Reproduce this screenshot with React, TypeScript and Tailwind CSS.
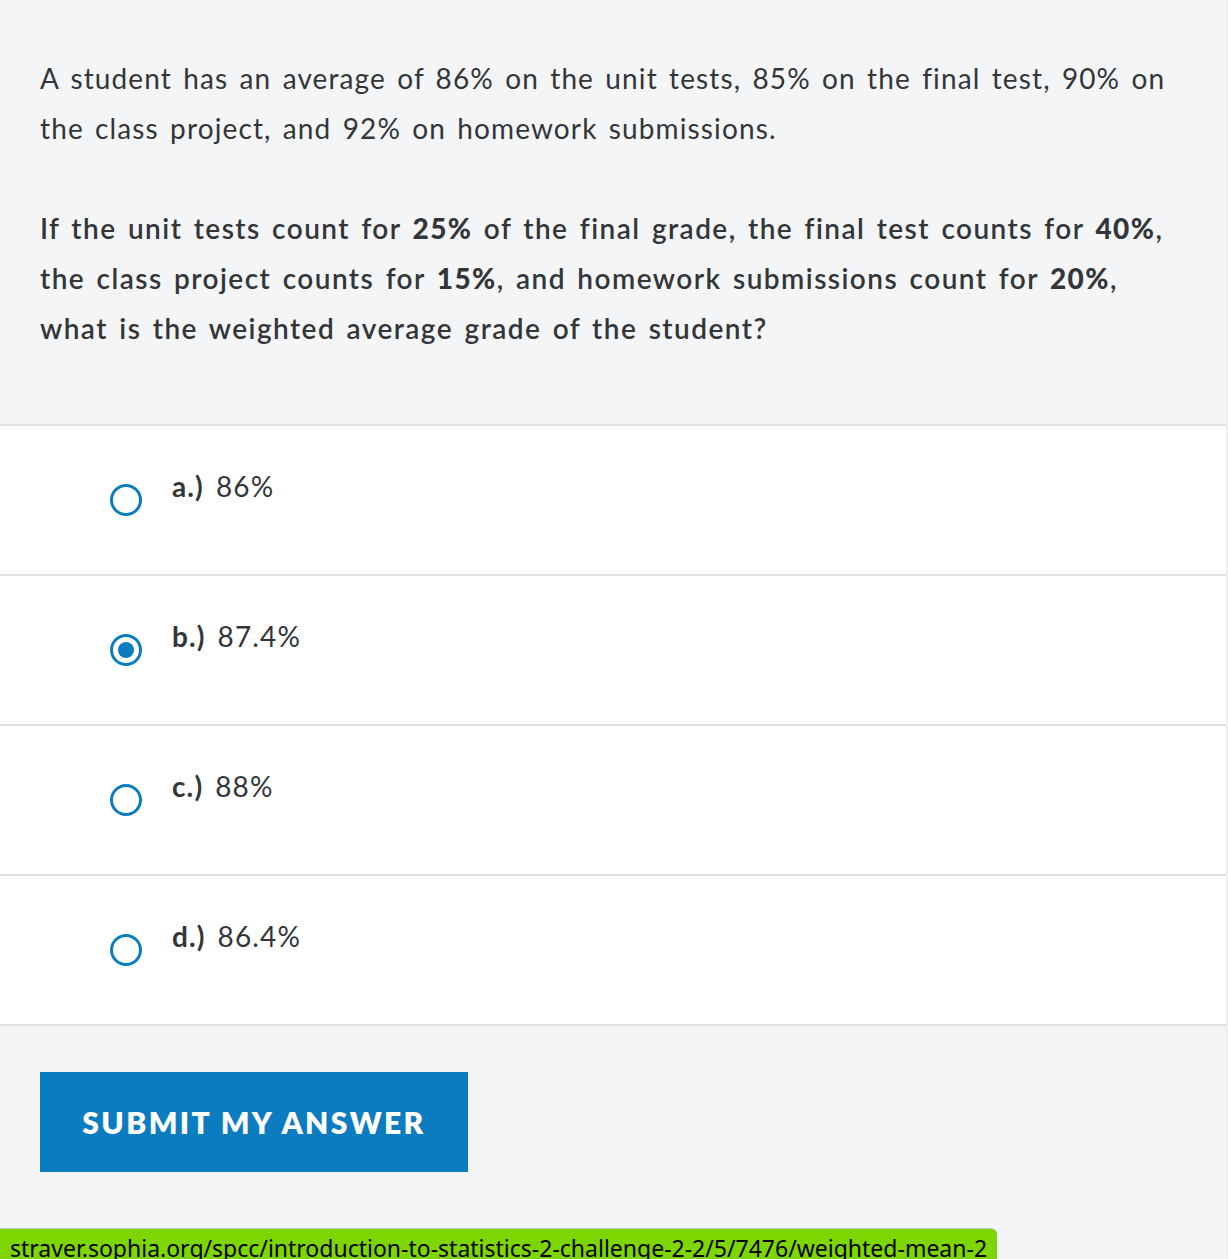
const options = [
  { key: 'a.)', value: '86%', selected: false },
  { key: 'b.)', value: '87.4%', selected: true },
  { key: 'c.)', value: '88%', selected: false },
  { key: 'd.)', value: '86.4%', selected: false },
]

function Radio({ selected }: { selected: boolean }) {
  return (
    <span className="flex h-8 w-8 shrink-0 items-center justify-center rounded-full border-[3px] border-[#0c7cc0]">
      {selected && <span className="h-4 w-4 rounded-full bg-[#0c7cc0]" />}
    </span>
  )
}

export default function App() {
  return (
    <div
      className="relative flex min-h-[1259px] bg-[#f4f5f7] tracking-[1.12px] text-[#333639] [word-spacing:3px]"
      style={{ fontFamily: 'Lato, "Open Sans", sans-serif' }}
    >
      <div className="w-[1226px]">
        {/* Pregunta */}
        <div className="px-10 pt-[53px] pb-[71px] text-[28px] leading-[50px]">
          <p>
            A student has an average of 86% on the unit tests, 85% on the final test, 90% on the
            class project, and 92% on homework submissions.
          </p>
          <p className="mt-[50px] font-semibold tracking-[1.45px]">
            If the unit tests count for <b>25%</b> of the final grade, the final test counts for{' '}
            <b>40%</b>, the class project counts for <b>15%</b>, and homework submissions count for{' '}
            <b>20%</b>, what is the weighted average grade of the student?
          </p>
        </div>

        {/* Opciones */}
        <div className="border-t-2 border-[#e0e1e4] bg-white">
          {options.map((o) => (
            <div
              key={o.key}
              className="flex h-[150px] items-start gap-[30px] border-b-2 border-[#e0e1e4] pl-[110px] pt-[58px]"
            >
              <Radio selected={o.selected} />
              <div className="-mt-[28px] flex items-center gap-3 text-[28px] leading-[60px]">
                <span className="font-bold">{o.key}</span>
                <span>{o.value}</span>
              </div>
            </div>
          ))}
        </div>

        {/* Botón */}
        <div className="px-10 pt-[46px]">
          <button className="flex h-[100px] w-[428px] items-center justify-center bg-[#0c7cc0] text-[30px] font-extrabold tracking-[0.08em] text-white [word-spacing:0px]">
            SUBMIT MY ANSWER
          </button>
        </div>
      </div>
      <div className="w-[2px] bg-[#eceef0]" />

      {/* Barra de estado */}
      <div
        className="fixed bottom-0 left-0 h-[31px] w-[997px] overflow-hidden rounded-tr-md border-t border-[#c8cbd0] bg-[#7ed600] pl-[10px] text-[23px] leading-[38px] tracking-normal text-black [word-spacing:0px]"
        style={{ fontFamily: '"Noto Sans", sans-serif' }}
      >
        straver.sophia.org/spcc/introduction-to-statistics-2-challenge-2-2/5/7476/weighted-mean-2
      </div>
    </div>
  )
}
